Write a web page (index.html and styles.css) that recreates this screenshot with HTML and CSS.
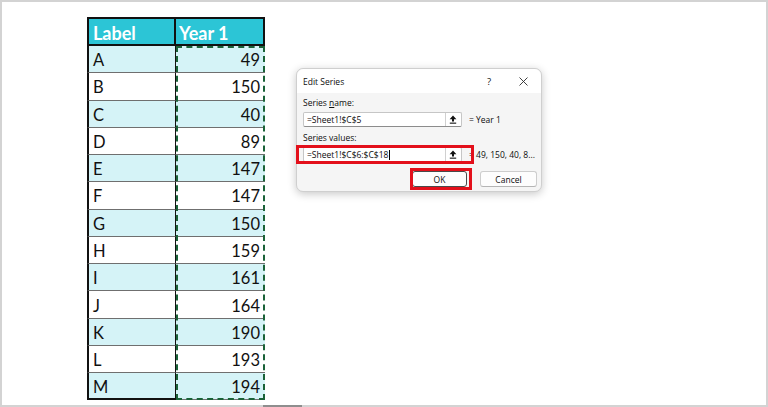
FILE: index.html
```html
<!DOCTYPE html>
<html>
<head>
<meta charset="utf-8">
<link rel="stylesheet" href="styles.css">
</head>
<body>
<div class="frame">
  <div class="sheet">
    <div class="table">
      <div class="col col-label">
        <div class="hcell">Label</div>
        <div class="cell alt">A</div>
        <div class="cell">B</div>
        <div class="cell alt">C</div>
        <div class="cell">D</div>
        <div class="cell alt">E</div>
        <div class="cell">F</div>
        <div class="cell alt">G</div>
        <div class="cell">H</div>
        <div class="cell alt">I</div>
        <div class="cell">J</div>
        <div class="cell alt">K</div>
        <div class="cell">L</div>
        <div class="cell alt last">M</div>
      </div>
      <div class="col col-val">
        <div class="hcell">Year 1</div>
        <div class="range">
          <div class="cell alt">49</div>
          <div class="cell">150</div>
          <div class="cell alt">40</div>
          <div class="cell">89</div>
          <div class="cell alt">147</div>
          <div class="cell">147</div>
          <div class="cell alt">150</div>
          <div class="cell">159</div>
          <div class="cell alt">161</div>
          <div class="cell">164</div>
          <div class="cell alt">190</div>
          <div class="cell">193</div>
          <div class="cell alt">194</div>
        </div>
      </div>
    </div>
  </div>
  <div class="bottom-bar"><div class="thumb"></div></div>

  <div class="dialog">
    <div class="titlebar">
      <span class="title">Edit Series</span>
      <span class="help">?</span>
      <svg class="close" width="9" height="9" viewBox="0 0 9 9"><path d="M0.5 0.5 L8.5 8.5 M8.5 0.5 L0.5 8.5" stroke="#2b2b2b" stroke-width="0.9" fill="none"/></svg>
    </div>
    <div class="body">
      <div class="label">Series <u>n</u>ame:</div>
      <div class="field-row">
        <div class="input"><span class="val">=Sheet1!$C$5</span>
          <span class="pick"><svg width="8" height="9" viewBox="0 0 8 9"><path d="M4 0.6 L7.4 4.2 H5 V6.6 H3 V4.2 H0.6 Z" fill="#111"/><rect x="0.8" y="7.6" width="6.4" height="1.1" fill="#111"/></svg></span>
        </div>
        <span class="result">= Year 1</span>
      </div>
      <div class="label label2">Series values:</div>
      <div class="field-row">
        <div class="input"><span class="val">=Sheet1!$C$6:$C$18</span><span class="caret"></span>
          <span class="pick"><svg width="8" height="9" viewBox="0 0 8 9"><path d="M4 0.6 L7.4 4.2 H5 V6.6 H3 V4.2 H0.6 Z" fill="#111"/><rect x="0.8" y="7.6" width="6.4" height="1.1" fill="#111"/></svg></span>
        </div>
        <span class="result">= 49, 150, 40, 8...</span>
      </div>
      <div class="buttons">
        <div class="btn btn-default">OK</div>
        <div class="btn">Cancel</div>
      </div>
    </div>
    <div class="mark mark-values"></div>
    <div class="mark mark-ok"></div>
  </div>
</div>
</body>
</html>
```
FILE: styles.css
```css
html, body {
  margin: 0;
  padding: 0;
  background: #ffffff;
}

.frame {
  position: relative;
  width: 768px;
  height: 407px;
  box-sizing: border-box;
  border: 2px solid #d3d3d3;
  border-bottom: none;
  display: flex;
  flex-direction: column;
  overflow: hidden;
}

.sheet {
  padding-left: 85px;
  padding-top: 15px;
}

.table {
  display: flex;
  font-family: "Lato", "Liberation Sans", sans-serif;
  font-size: 16.5px;
  color: #111;
}

.col {
  display: flex;
  flex-direction: column;
  width: 89px;
}

.hcell {
  height: 29px;
  box-sizing: border-box;
  background: #2cc5d6;
  color: #ffffff;
  font-weight: 700;
  font-size: 18px;
  border-top: 2px solid #111;
  border-bottom: 2px solid #111;
  display: flex;
  align-items: center;
  padding-top: 2px;
}

.col-label .hcell {
  border-left: 2px solid #111;
  border-right: 2px solid #111;
  padding-left: 4px;
}

.col-val .hcell {
  border-right: 2px solid #111;
  padding-left: 3px;
}

.cell {
  height: 27.28px;
  box-sizing: border-box;
  border-bottom: 1px solid #6f6f6f;
  background: #ffffff;
  display: flex;
  align-items: center;
  padding-top: 2px;
}

.cell.alt {
  background: #d5f3f7;
}

.col-label .cell {
  border-left: 2px solid #111;
  border-right: 1px solid #111;
  padding-left: 4px;
}

.col-label .cell.last {
  border-bottom: 2px solid #111;
}

.col-val .cell {
  justify-content: flex-end;
  padding-right: 5px;
}

.range {
  display: flex;
  flex-direction: column;
  outline: 2px dashed #1a6238;
  outline-offset: -2px;
}

.bottom-bar {
  margin-top: auto;
  height: 2px;
  background: #d3d3d3;
}

.thumb {
  margin-left: 261px;
  width: 39px;
  height: 2px;
  background: #8e8e8e;
}

/* dialog */
.dialog {
  position: absolute;
  left: 294px;
  top: 66px;
  width: 246px;
  height: 124px;
  box-sizing: border-box;
  background: #f5f5f5;
  border: 1px solid #cfcfcf;
  border-radius: 7px;
  box-shadow: 0 2px 8px rgba(0, 0, 0, 0.22);
  font-family: "Open Sans", "Noto Sans", sans-serif;
  font-size: 8.5px;
  color: #0d0d0d;
}

.titlebar {
  height: 24px;
  box-sizing: border-box;
  display: flex;
  align-items: center;
  padding: 1px 13px 0 6px;
  background: #ffffff;
  border-radius: 7px 7px 0 0;
}

.title {
  flex: 1;
}

.help {
  font-size: 9.5px;
  margin-right: 28px;
}

.close {
  display: block;
}

.body {
  padding: 4px 4px 0 6px;
}

.label {
  line-height: 12px;
  height: 12px;
}

.label u {
  text-decoration-thickness: 0.7px;
  text-underline-offset: 1px;
}

.label2 {
  margin-top: 5px;
}

.field-row {
  display: flex;
  align-items: center;
  margin-top: 3px;
}

.input {
  width: 159px;
  height: 15px;
  box-sizing: border-box;
  background: #ffffff;
  border: 1px solid #c6c6c6;
  border-bottom-color: #8c8c8c;
  border-radius: 2px;
  display: flex;
  align-items: center;
  padding-left: 3px;
}

.val {
  line-height: 13px;
}

.caret {
  width: 1px;
  height: 10px;
  background: #000;
  margin-left: 1px;
}

.pick {
  margin-left: auto;
  width: 15px;
  height: 13px;
  box-sizing: border-box;
  border-left: 1px solid #d0d0d0;
  margin-right: 1px;
  display: flex;
  align-items: center;
  justify-content: center;
}

.pick svg {
  display: block;
}

.result {
  margin-left: 7px;
  white-space: nowrap;
}

.buttons {
  display: flex;
  justify-content: flex-end;
  gap: 13px;
  margin-top: 9px;
}

.btn {
  width: 57px;
  height: 16px;
  box-sizing: border-box;
  background: #fdfdfd;
  border: 1px solid #cdcdcd;
  border-bottom-color: #b5b5b5;
  border-radius: 3px;
  display: flex;
  align-items: center;
  justify-content: center;
}

.btn-default {
  width: 55px;
  border: 1px solid #4a4a4a;
}

.mark {
  position: absolute;
  box-sizing: border-box;
  border: 3px solid #e3101b;
}

.mark-values {
  left: -1px;
  top: 76px;
  width: 178px;
  height: 19px;
}

.mark-ok {
  left: 113px;
  top: 99px;
  width: 62px;
  height: 22px;
}
```
